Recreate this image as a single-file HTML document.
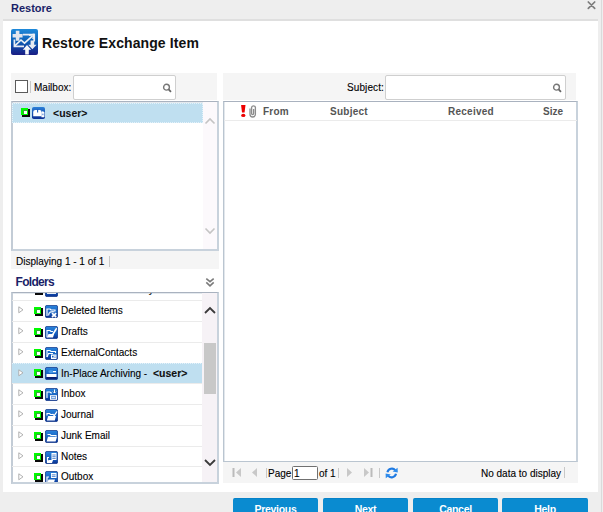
<!DOCTYPE html>
<html><head><meta charset="utf-8">
<style>
*{box-sizing:border-box;margin:0;padding:0}
html,body{width:603px;height:512px;overflow:hidden;background:#eeeeee;font-family:"Liberation Sans",sans-serif;color:#222}
.a{position:absolute}
.t{position:absolute;white-space:nowrap;line-height:10px;font-size:10px;color:#000;-webkit-text-stroke:0.1px currentColor}
.b{font-weight:bold;-webkit-text-stroke:0}
#content{left:3px;top:21px;width:595px;height:471px;background:#fff}
#topline{left:3px;top:19px;width:595px;height:2px;background:#dfdfdf}
#rstrip{left:601px;top:0;width:1px;height:512px;background:#dadada}
.tb{background:#f5f5f5}
.inp{background:#fff;border:1px solid #cfcfcf;border-radius:2px}
.lst{border:2px solid #c8d2dc;border-left-color:#c3ccd6;border-top:1px solid #a9b2bf;box-shadow:inset 0 1px 0 #e4e9ee;background:#fff}
.grd{border:1px solid #bac5d0;border-right:2px solid #c8d2dc;border-top-color:#a9b2bf;box-shadow:inset 1px 0 0 #e2e7ec;background:#fff}
.sep{background:#ebebeb;height:1px}
.vsep{width:1px;background:#c8c8c8}
.gsq{width:9px;height:9px}
.gsq:before{content:"";position:absolute;left:1px;top:1px;width:8px;height:8px;background:#0a0a0a}
.gsq:after{content:"";position:absolute;left:0;top:0;width:7px;height:7px;background:#00fa00}
.gsq i{position:absolute;z-index:2;left:2px;top:2px;width:4px;height:4px;background:#38a838;}
.gsq i:after{content:"";position:absolute;left:1px;top:1px;width:3px;height:3px;background:#fff}
.fic{width:13px;height:13px;border-radius:2px;background:linear-gradient(#2a86d8,#0c3f9a)}
.btn{top:498px;height:20px;width:85px;background:#0a8bd0;border-top:1px solid #0582c9;border-radius:2px 2px 0 0;color:#fff;font-weight:bold;font-size:10.5px;letter-spacing:-0.3px;text-align:center;line-height:20px}
</style></head><body>
<!-- title bar -->
<div class="t b" style="left:11px;top:3px;font-size:11px;line-height:11px;color:#1a1f68">Restore</div>
<svg class="a" style="left:586px;top:0px" width="11" height="11" viewBox="0 0 11 11"><path d="M2.3 2 L8.7 8.4 M8.7 2 L2.3 8.4" stroke="#7c7c7c" stroke-width="1.7" stroke-linecap="round"/></svg>
<div id="topline" class="a"></div>
<div id="content" class="a"></div>
<div id="rstrip" class="a"></div>

<!-- header icon -->
<svg class="a" style="left:11px;top:29px" width="27" height="26" viewBox="0 0 27 26">
<defs><linearGradient id="hg" x1="0" y1="0" x2="0" y2="1"><stop offset="0" stop-color="#1f8ada"/><stop offset="0.5" stop-color="#0c5cb4"/><stop offset="1" stop-color="#1a1d84"/></linearGradient></defs>
<rect x="0" y="0" width="27" height="26" rx="2" fill="url(#hg)"/>
<path d="M4.8 1.8h3.6v3.2h3.2v3.6h-3.2v3.2h-3.6v-3.2h-3.2v-3.6h3.2z" fill="#e2e6ee"/>
<path d="M3.4 10.5 V17.4 H13" stroke="#e8ecf4" stroke-width="1.7" fill="none"/>
<path d="M11.8 5.6 H23.2 V12.5" stroke="#e8ecf4" stroke-width="1.8" fill="none"/>
<path d="M4 16.6 L10 11 L13.5 14.2 L21.5 6.8" stroke="#eef1f6" stroke-width="1.6" fill="none"/>
<path d="M18 6.2 L22.6 5.4 L22 10" stroke="#eef1f6" stroke-width="1.5" fill="none"/>
<path d="M19.6 11.5h3.6v4.2h2.4l-4.2 4.6-4.2-4.6h2.4z" fill="#e6eaf2"/>
<path d="M14.2 25.5v-4.8h-2.4l4.2-4.6 4.2 4.6h-2.4v4.8z" fill="#f6f8fb"/>
</svg>
<div class="t b" style="left:42px;top:36px;font-size:14px;line-height:14px;letter-spacing:0.1px;color:#111">Restore Exchange Item</div>

<!-- LEFT: mailbox toolbar -->
<div class="a tb" style="left:11px;top:73px;width:206px;height:27px"></div>
<div class="a" style="left:15px;top:80px;width:13px;height:13px;border:1px solid #5a5a5a;background:#fff"></div>
<div class="a vsep" style="left:30px;top:81px;height:12px"></div>
<div class="t" style="left:34px;top:83px">Mailbox:</div>
<div class="a inp" style="left:73px;top:75px;width:103px;height:25px"></div>
<svg class="a" style="left:162px;top:83px" width="11" height="10" viewBox="0 0 11 10"><circle cx="4.5" cy="4.2" r="2.9" stroke="#777" stroke-width="1.4" fill="none"/><path d="M6.6 6.4 L9 8.8" stroke="#666" stroke-width="1.8"/></svg>

<!-- LEFT: mailbox list -->
<div class="a lst" style="left:11px;top:101px;width:208px;height:150px"></div>
<div class="a" style="left:203px;top:102px;width:14px;height:147px;background:#fcf9fc"></div>
<div class="a" style="left:12px;top:103px;width:191px;height:20px;background:#bfdff0;border:1px dotted #e4f2fa"></div>
<div class="a gsq" style="left:21px;top:108px"><i></i></div>
<svg class="a" style="left:32px;top:107px" width="13" height="12" viewBox="0 0 13 12"><defs><linearGradient id="mg" x1="0" y1="0" x2="0" y2="1"><stop offset="0" stop-color="#2a7fd8"/><stop offset="1" stop-color="#0b2e92"/></linearGradient></defs><rect width="13" height="12" rx="1.8" fill="url(#mg)"/><path d="M1.2 9.3 V5 Q1.2 3 3.4 3 H7.6 Q9.6 3 9.6 5 V9.3 Z" fill="#fff"/><path d="M5.6 2.2 V5.6" stroke="#1a5ec0" stroke-width="1.1"/><path d="M9.4 10.2 V5.6 L10.9 4 L12.4 5.6 V10.2 Z" fill="#fff"/><rect x="10.4" y="6.6" width="1" height="1.6" fill="#3a78d0"/></svg>
<div class="t b" style="left:53px;top:108px;font-size:10.5px;line-height:10px;color:#111">&lt;user&gt;</div>
<svg class="a" style="left:204px;top:116px" width="12" height="10" viewBox="0 0 12 10"><path d="M1.5 7.5 L6 3 L10.5 7.5" stroke="#c4c4c4" stroke-width="1.6" fill="none"/></svg>
<svg class="a" style="left:204px;top:226px" width="12" height="10" viewBox="0 0 12 10"><path d="M1.5 2.5 L6 7 L10.5 2.5" stroke="#c4c4c4" stroke-width="1.6" fill="none"/></svg>

<!-- displaying bar -->
<div class="a tb" style="left:11px;top:251px;width:208px;height:18px"></div>
<div class="t" style="left:16px;top:257px">Displaying 1 - 1 of 1</div>
<div class="a vsep" style="left:109px;top:256px;height:11px"></div>

<!-- folders -->
<div class="t b" style="left:15.5px;top:276px;font-size:12px;line-height:12px;letter-spacing:-0.7px;color:#1a1f68">Folders</div>
<svg class="a" style="left:205px;top:277px" width="10" height="11" viewBox="0 0 10 11"><path d="M1.3 1.6 L5 4.6 L8.7 1.6 M1.3 5.4 L5 8.8 L8.7 5.4" stroke="#7a7a7a" stroke-width="1.6" fill="none"/></svg>
<div class="a lst" style="left:11px;top:292px;width:208px;height:192px"></div>
<!--ROWS-->
<div id="rows" class="a" style="left:12px;top:293px;width:191px;height:189px;overflow:hidden">
<svg class="a" style="left:6px;top:-8px" width="6" height="8" viewBox="0 0 6 8"><path d="M0.8 0.8 L5 3.8 L0.8 6.8z" fill="#fff" stroke="#a9a9a9" stroke-width="0.9"/></svg>
<div class="a gsq" style="left:22px;top:-7px"><i></i></div>
<svg class="a" style="left:33px;top:-9px" width="13" height="13" viewBox="0 0 13 13"><defs><linearGradient id="fg0" x1="0" y1="0" x2="0" y2="1"><stop offset="0" stop-color="#2a84dc"/><stop offset="0.6" stop-color="#1560c0"/><stop offset="1" stop-color="#0a2e90"/></linearGradient></defs><rect x="0.4" y="0.4" width="12.2" height="12.2" rx="1.5" fill="url(#fg0)" stroke="#0c3488" stroke-width="0.8"/><path d="M2 4h9v6h-9z" fill="#fff" opacity="0.9"/><path d="M3 5h7v4h-7z" fill="#3a7ad0"/></svg>
<div class="t fn" style="left:49px;top:-8px">Conversation History</div>
<div class="a sep" style="left:0px;top:7px;width:191px"></div>
<svg class="a" style="left:6px;top:13px" width="6" height="8" viewBox="0 0 6 8"><path d="M0.8 0.8 L5 3.8 L0.8 6.8z" fill="#fff" stroke="#a9a9a9" stroke-width="0.9"/></svg>
<div class="a gsq" style="left:22px;top:14px"><i></i></div>
<svg class="a" style="left:33px;top:12px" width="13" height="13" viewBox="0 0 13 13"><defs><linearGradient id="fg1" x1="0" y1="0" x2="0" y2="1"><stop offset="0" stop-color="#2a84dc"/><stop offset="0.6" stop-color="#1560c0"/><stop offset="1" stop-color="#0a2e90"/></linearGradient></defs><rect x="0.4" y="0.4" width="12.2" height="12.2" rx="1.5" fill="url(#fg1)" stroke="#0c3488" stroke-width="0.8"/><path d="M2 11 V4 H5 L6 5 H10 V6.5" stroke="#fff" stroke-width="1.2" fill="none"/><path d="M3.6 10.5 C3.6 7.2 6 6 9.5 6.8" stroke="#e6eefa" stroke-width="1.3" fill="none"/><path d="M7 8.2 L11.2 12 M11.2 8.2 L7 12" stroke="#fff" stroke-width="1.7"/></svg>
<div class="t fn" style="left:49px;top:13px">Deleted Items</div>
<div class="a sep" style="left:0px;top:28px;width:191px"></div>
<svg class="a" style="left:6px;top:34px" width="6" height="8" viewBox="0 0 6 8"><path d="M0.8 0.8 L5 3.8 L0.8 6.8z" fill="#fff" stroke="#a9a9a9" stroke-width="0.9"/></svg>
<div class="a gsq" style="left:22px;top:35px"><i></i></div>
<svg class="a" style="left:33px;top:33px" width="13" height="13" viewBox="0 0 13 13"><defs><linearGradient id="fg2" x1="0" y1="0" x2="0" y2="1"><stop offset="0" stop-color="#2a84dc"/><stop offset="0.6" stop-color="#1560c0"/><stop offset="1" stop-color="#0a2e90"/></linearGradient></defs><rect x="0.4" y="0.4" width="12.2" height="12.2" rx="1.5" fill="url(#fg2)" stroke="#0c3488" stroke-width="0.8"/><path d="M2 11.5 V4.5 H5 L6 5.5 H8" stroke="#fff" stroke-width="1.1" fill="none"/><path d="M2 11.5 L3.5 8 H9 L8 11.5 Z" fill="#fff"/><path d="M6.8 10 L11.2 3" stroke="#fff" stroke-width="1.6"/><path d="M10.4 2.4 L12 1.8 L11.8 3.6z" fill="#fff"/></svg>
<div class="t fn" style="left:49px;top:34px">Drafts</div>
<div class="a sep" style="left:0px;top:49px;width:191px"></div>
<svg class="a" style="left:6px;top:55px" width="6" height="8" viewBox="0 0 6 8"><path d="M0.8 0.8 L5 3.8 L0.8 6.8z" fill="#fff" stroke="#a9a9a9" stroke-width="0.9"/></svg>
<div class="a gsq" style="left:22px;top:56px"><i></i></div>
<svg class="a" style="left:33px;top:54px" width="13" height="13" viewBox="0 0 13 13"><defs><linearGradient id="fg3" x1="0" y1="0" x2="0" y2="1"><stop offset="0" stop-color="#2a84dc"/><stop offset="0.6" stop-color="#1560c0"/><stop offset="1" stop-color="#0a2e90"/></linearGradient></defs><rect x="0.4" y="0.4" width="12.2" height="12.2" rx="1.5" fill="url(#fg3)" stroke="#0c3488" stroke-width="0.8"/><path d="M2 10 V3.5 H5 L6 4.5 H10.5 V6" stroke="#fff" stroke-width="1.1" fill="none"/><path d="M2 10 L3.5 6.5 H8" stroke="#fff" stroke-width="1.1" fill="none"/><path d="M6 7.5h5.5v4.5h-5.5z" fill="#fff"/><path d="M7 8.8h1.6v1.6h-1.6z" fill="#1a5cb8"/><path d="M9.4 9h1.2M9.4 10.5h1.2" stroke="#1a5cb8" stroke-width="0.7"/></svg>
<div class="t fn" style="left:49px;top:55px">ExternalContacts</div>
<div class="a" style="left:0px;top:70px;width:191px;height:21px;background:#bfdff0;border:1px dotted #e6f2fa;border-left:0"></div>
<svg class="a" style="left:6px;top:76px" width="6" height="8" viewBox="0 0 6 8"><path d="M0.8 0.8 L5 3.8 L0.8 6.8z" fill="#fff" stroke="#a9a9a9" stroke-width="0.9"/></svg>
<div class="a gsq" style="left:22px;top:76px"><i></i></div>
<svg class="a" style="left:33px;top:74px" width="13" height="13" viewBox="0 0 13 13"><defs><linearGradient id="fg4" x1="0" y1="0" x2="0" y2="1"><stop offset="0" stop-color="#2a84dc"/><stop offset="0.6" stop-color="#1560c0"/><stop offset="1" stop-color="#0a2e90"/></linearGradient></defs><rect x="0.4" y="0.4" width="12.2" height="12.2" rx="1.5" fill="url(#fg4)" stroke="#0c3488" stroke-width="0.8"/><path d="M1.5 7 H11.5 V10 H1.5 Z" fill="#fff"/><path d="M1.5 10h10v1.8h-10z" fill="#0a2070"/><ellipse cx="6" cy="4.6" rx="2.6" ry="1.6" fill="#4a9ae6"/><path d="M8 4h3v1.3h-3z" fill="#fff"/></svg>
<div class="t fn" style="left:49px;top:75px">In-Place Archiving - <b style="font-size:10.5px;color:#111;margin-left:3px">&lt;user&gt;</b></div>
<div class="a sep" style="left:0px;top:90px;width:191px"></div>
<svg class="a" style="left:6px;top:96px" width="6" height="8" viewBox="0 0 6 8"><path d="M0.8 0.8 L5 3.8 L0.8 6.8z" fill="#fff" stroke="#a9a9a9" stroke-width="0.9"/></svg>
<div class="a gsq" style="left:22px;top:97px"><i></i></div>
<svg class="a" style="left:33px;top:95px" width="13" height="13" viewBox="0 0 13 13"><defs><linearGradient id="fg5" x1="0" y1="0" x2="0" y2="1"><stop offset="0" stop-color="#2a84dc"/><stop offset="0.6" stop-color="#1560c0"/><stop offset="1" stop-color="#0a2e90"/></linearGradient></defs><rect x="0.4" y="0.4" width="12.2" height="12.2" rx="1.5" fill="url(#fg5)" stroke="#0c3488" stroke-width="0.8"/><path d="M2 10 V4 H5 L6 5 H7" stroke="#fff" stroke-width="1.1" fill="none"/><path d="M5 7.2h7v4.6h-7z" fill="#fff"/><path d="M6 8.3h5v2.4h-5z" fill="#3a7ad0"/><path d="M6.5 9.5h4" stroke="#fff" stroke-width="0.8"/><path d="M9.5 1.5 V5 M8 3.5 L9.5 5 L11 3.5" stroke="#fff" stroke-width="1"/></svg>
<div class="t fn" style="left:49px;top:96px">Inbox</div>
<div class="a sep" style="left:0px;top:111px;width:191px"></div>
<svg class="a" style="left:6px;top:117px" width="6" height="8" viewBox="0 0 6 8"><path d="M0.8 0.8 L5 3.8 L0.8 6.8z" fill="#fff" stroke="#a9a9a9" stroke-width="0.9"/></svg>
<div class="a gsq" style="left:22px;top:118px"><i></i></div>
<svg class="a" style="left:33px;top:116px" width="13" height="13" viewBox="0 0 13 13"><defs><linearGradient id="fg6" x1="0" y1="0" x2="0" y2="1"><stop offset="0" stop-color="#2a84dc"/><stop offset="0.6" stop-color="#1560c0"/><stop offset="1" stop-color="#0a2e90"/></linearGradient></defs><rect x="0.4" y="0.4" width="12.2" height="12.2" rx="1.5" fill="url(#fg6)" stroke="#0c3488" stroke-width="0.8"/><path d="M2 6.5 V4.5 H4.5 L5.5 5.5 H8" stroke="#fff" stroke-width="1.1" fill="none"/><path d="M1.8 11.5 L3.2 7 H11 L9.8 11.5 Z" fill="#fff"/><path d="M7.5 5 L9.3 6.6 L12 2.5" stroke="#fff" stroke-width="1.3" fill="none"/></svg>
<div class="t fn" style="left:49px;top:117px">Journal</div>
<div class="a sep" style="left:0px;top:132px;width:191px"></div>
<svg class="a" style="left:6px;top:138px" width="6" height="8" viewBox="0 0 6 8"><path d="M0.8 0.8 L5 3.8 L0.8 6.8z" fill="#fff" stroke="#a9a9a9" stroke-width="0.9"/></svg>
<div class="a gsq" style="left:22px;top:139px"><i></i></div>
<svg class="a" style="left:33px;top:137px" width="13" height="13" viewBox="0 0 13 13"><defs><linearGradient id="fg7" x1="0" y1="0" x2="0" y2="1"><stop offset="0" stop-color="#2a84dc"/><stop offset="0.6" stop-color="#1560c0"/><stop offset="1" stop-color="#0a2e90"/></linearGradient></defs><rect x="0.4" y="0.4" width="12.2" height="12.2" rx="1.5" fill="url(#fg7)" stroke="#0c3488" stroke-width="0.8"/><path d="M2.5 4.5 H5 L6 5.5 H11 V6.5" stroke="#fff" stroke-width="1.1" fill="none"/><path d="M1.6 11.5 L3 6.8 H12 L10.6 11.5 Z" fill="#fff"/></svg>
<div class="t fn" style="left:49px;top:138px">Junk Email</div>
<div class="a sep" style="left:0px;top:153px;width:191px"></div>
<svg class="a" style="left:6px;top:159px" width="6" height="8" viewBox="0 0 6 8"><path d="M0.8 0.8 L5 3.8 L0.8 6.8z" fill="#fff" stroke="#a9a9a9" stroke-width="0.9"/></svg>
<div class="a gsq" style="left:22px;top:160px"><i></i></div>
<svg class="a" style="left:33px;top:158px" width="13" height="13" viewBox="0 0 13 13"><defs><linearGradient id="fg8" x1="0" y1="0" x2="0" y2="1"><stop offset="0" stop-color="#2a84dc"/><stop offset="0.6" stop-color="#1560c0"/><stop offset="1" stop-color="#0a2e90"/></linearGradient></defs><rect x="0.4" y="0.4" width="12.2" height="12.2" rx="1.5" fill="url(#fg8)" stroke="#0c3488" stroke-width="0.8"/><path d="M2.5 12 V6.5 H4" stroke="#fff" stroke-width="1.2" fill="none"/><path d="M2 12 L3.5 9 H8 L7 12 Z" fill="#fff"/><path d="M6.5 2h5v7h-5z" fill="#fff"/><path d="M7.3 4h3.4M7.3 5.7h3.4M7.3 7.4h3.4" stroke="#2a6ac4" stroke-width="0.8"/></svg>
<div class="t fn" style="left:49px;top:159px">Notes</div>
<div class="a sep" style="left:0px;top:173px;width:191px"></div>
<svg class="a" style="left:6px;top:180px" width="6" height="8" viewBox="0 0 6 8"><path d="M0.8 0.8 L5 3.8 L0.8 6.8z" fill="#fff" stroke="#a9a9a9" stroke-width="0.9"/></svg>
<div class="a gsq" style="left:22px;top:180px"><i></i></div>
<svg class="a" style="left:33px;top:178px" width="13" height="13" viewBox="0 0 13 13"><defs><linearGradient id="fg9" x1="0" y1="0" x2="0" y2="1"><stop offset="0" stop-color="#2a84dc"/><stop offset="0.6" stop-color="#1560c0"/><stop offset="1" stop-color="#0a2e90"/></linearGradient></defs><rect x="0.4" y="0.4" width="12.2" height="12.2" rx="1.5" fill="url(#fg9)" stroke="#0c3488" stroke-width="0.8"/><path d="M2 12 V6 H4" stroke="#fff" stroke-width="1.2" fill="none"/><path d="M2 12 L3.5 8.5 H10 L8.8 12 Z" fill="#fff"/><path d="M6 2h5.5v5h-5.5z" fill="#fff"/><path d="M6.8 3.8h3.8M6.8 5.4h3.8" stroke="#2a6ac4" stroke-width="0.8"/></svg>
<div class="t fn" style="left:49px;top:179px">Outbox</div>
</div>
<!--/ROWS-->
<div class="a" style="left:202px;top:293px;width:15px;height:189px;background:#f6f2f6"></div>
<div class="a" style="left:204px;top:343px;width:12px;height:51px;background:#c8c8c8"></div>
<svg class="a" style="left:203px;top:304px" width="14" height="12" viewBox="0 0 14 12"><path d="M2 9 L7 4 L12 9" stroke="#3a3a3a" stroke-width="1.8" fill="none"/></svg>
<svg class="a" style="left:203px;top:457px" width="14" height="12" viewBox="0 0 14 12"><path d="M2 3 L7 8 L12 3" stroke="#3a3a3a" stroke-width="1.8" fill="none"/></svg>

<!-- RIGHT -->
<div class="a tb" style="left:223px;top:73px;width:353px;height:27px"></div>
<div class="t" style="left:347px;top:83px;letter-spacing:0.1px">Subject:</div>
<div class="a inp" style="left:385px;top:75px;width:181px;height:25px"></div>
<svg class="a" style="left:552px;top:83px" width="11" height="10" viewBox="0 0 11 10"><circle cx="4.5" cy="4.2" r="2.9" stroke="#777" stroke-width="1.4" fill="none"/><path d="M6.6 6.4 L9 8.8" stroke="#666" stroke-width="1.8"/></svg>
<div class="a grd" style="left:223px;top:101px;width:355px;height:361px"></div>
<div class="a sep" style="left:224px;top:120px;width:353px"></div>
<svg class="a" style="left:240px;top:104px" width="7" height="14" viewBox="0 0 7 14"><path d="M1.1 1 H5.5 L4.6 8.6 H2 Z" fill="#ec0000"/><ellipse cx="3.3" cy="11.4" rx="2.1" ry="1.7" fill="#ec0000"/></svg>
<svg class="a" style="left:248px;top:104px" width="10" height="14" viewBox="0 0 10 14"><path d="M2 4.5 V10.3 A2.7 2.7 0 0 0 7.4 10.3 V3.2 A2 2 0 0 0 3.6 3.2 V9.6 A1 1 0 0 0 5.6 9.6 V5" stroke="#8c8c8c" stroke-width="1.3" fill="none"/></svg>
<div class="t b" style="left:263px;top:107px;color:#555;letter-spacing:0.25px">From</div>
<div class="t b" style="left:330px;top:107px;color:#555;letter-spacing:0.25px">Subject</div>
<div class="t b" style="left:448px;top:107px;color:#555;letter-spacing:0.25px">Received</div>
<div class="t b" style="left:543px;top:107px;color:#555">Size</div>

<!-- pager -->
<div class="a tb" style="left:223px;top:462px;width:355px;height:21px"></div>
<svg class="a" style="left:232px;top:467px" width="10" height="11" viewBox="0 0 10 11"><rect x="0.5" y="1" width="2" height="9" fill="#bbb"/><path d="M9 1 L4 5.5 L9 10z" fill="#c8c8c8"/></svg>
<svg class="a" style="left:251px;top:467px" width="7" height="11" viewBox="0 0 7 11"><path d="M6 1 L1 5.5 L6 10z" fill="#c8c8c8"/></svg>
<div class="a vsep" style="left:266px;top:468px;height:10px"></div>
<div class="t" style="left:268px;top:469px">Page</div>
<div class="a" style="left:292px;top:466px;width:26px;height:14px;border:1px solid #707070;border-radius:1.5px;background:#fff"></div>
<div class="t" style="left:294px;top:469px">1</div>
<div class="t" style="left:319px;top:469px">of 1</div>
<div class="a vsep" style="left:338px;top:468px;height:10px"></div>
<svg class="a" style="left:346px;top:467px" width="7" height="11" viewBox="0 0 7 11"><path d="M1 1 L6 5.5 L1 10z" fill="#c8c8c8"/></svg>
<svg class="a" style="left:363px;top:467px" width="11" height="11" viewBox="0 0 11 11"><path d="M1 1 L6 5.5 L1 10z" fill="#c8c8c8"/><rect x="7.5" y="1" width="2" height="9" fill="#bbb"/></svg>
<div class="a vsep" style="left:379px;top:468px;height:10px"></div>
<svg class="a" style="left:385px;top:466px" width="14" height="14" viewBox="0 0 14 14"><path d="M2.4 6.2 C3.2 2.6 8 1.4 10.4 4.4" stroke="#1f7ae2" stroke-width="2.1" fill="none"/><path d="M7.6 5.4 L12.8 6.6 L12.6 1.8 Z" fill="#2f8cec"/><path d="M11 7.8 C10.2 11.4 5.4 12.6 3 9.6" stroke="#1f7ae2" stroke-width="2.1" fill="none"/><path d="M5.8 8.6 L0.6 7.4 L0.8 12.2 Z" fill="#2f8cec"/></svg>
<div class="t" style="left:481px;top:469px">No data to display</div>
<div class="a vsep" style="left:564px;top:467px;height:11px"></div>

<!-- footer buttons -->
<div class="a btn" style="left:233px">Previous</div>
<div class="a btn" style="left:323px">Next</div>
<div class="a btn" style="left:413px">Cancel</div>
<div class="a btn" style="left:502px;width:86px">Help</div>
</body></html>
